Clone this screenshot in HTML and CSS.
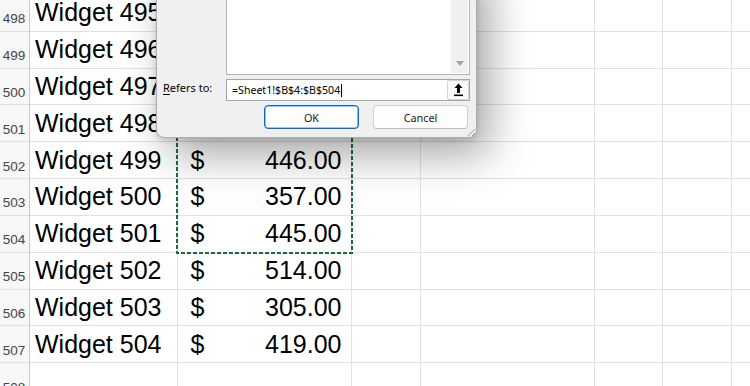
FILE: index.html
```html
<!DOCTYPE html>
<html lang="en">
<head>
<meta charset="utf-8">
<title>Name Manager - Refers to</title>
<link rel="stylesheet" href="styles.css">
</head>
<body>
<div class="screen">
  <div class="sheet">
    <div class="row"><div class="hdr">498</div><div class="cell name">Widget 495</div><div class="cell money"></div><div class="cell"></div><div class="cell"></div><div class="cell"></div><div class="cell"></div><div class="cell last"></div></div>
    <div class="row"><div class="hdr">499</div><div class="cell name">Widget 496</div><div class="cell money"></div><div class="cell"></div><div class="cell"></div><div class="cell"></div><div class="cell"></div><div class="cell last"></div></div>
    <div class="row"><div class="hdr">500</div><div class="cell name">Widget 497</div><div class="cell money"></div><div class="cell"></div><div class="cell"></div><div class="cell"></div><div class="cell"></div><div class="cell last"></div></div>
    <div class="row"><div class="hdr">501</div><div class="cell name">Widget 498</div><div class="cell money"></div><div class="cell"></div><div class="cell"></div><div class="cell"></div><div class="cell"></div><div class="cell last"></div></div>
    <div class="row"><div class="hdr">502</div><div class="cell name">Widget 499</div><div class="cell money"><span>$</span><span>446.00</span></div><div class="cell"></div><div class="cell"></div><div class="cell"></div><div class="cell"></div><div class="cell last"></div></div>
    <div class="row"><div class="hdr">503</div><div class="cell name">Widget 500</div><div class="cell money"><span>$</span><span>357.00</span></div><div class="cell"></div><div class="cell"></div><div class="cell"></div><div class="cell"></div><div class="cell last"></div></div>
    <div class="row"><div class="hdr">504</div><div class="cell name">Widget 501</div><div class="cell money"><span>$</span><span>445.00</span></div><div class="cell"></div><div class="cell"></div><div class="cell"></div><div class="cell"></div><div class="cell last"></div></div>
    <div class="row"><div class="hdr">505</div><div class="cell name">Widget 502</div><div class="cell money"><span>$</span><span>514.00</span></div><div class="cell"></div><div class="cell"></div><div class="cell"></div><div class="cell"></div><div class="cell last"></div></div>
    <div class="row"><div class="hdr">506</div><div class="cell name">Widget 503</div><div class="cell money"><span>$</span><span>305.00</span></div><div class="cell"></div><div class="cell"></div><div class="cell"></div><div class="cell"></div><div class="cell last"></div></div>
    <div class="row"><div class="hdr">507</div><div class="cell name">Widget 504</div><div class="cell money"><span>$</span><span>419.00</span></div><div class="cell"></div><div class="cell"></div><div class="cell"></div><div class="cell"></div><div class="cell last"></div></div>
    <div class="row"><div class="hdr">508</div><div class="cell name"></div><div class="cell money"></div><div class="cell"></div><div class="cell"></div><div class="cell"></div><div class="cell"></div><div class="cell last"></div></div>
  </div>

  <svg class="marquee" width="177" height="267" viewBox="0 0 177 267" aria-hidden="true">
    <rect x="1" y="1" width="175" height="264" fill="none" stroke="#1d6b3c" stroke-width="2" stroke-dasharray="4 2"/>
  </svg>

  <div class="dialog">
    <div class="listbox">
      <div class="list-area"></div>
      <div class="vscroll"><span class="arrow-down"></span></div>
    </div>
    <div class="refers">
      <label class="refers-label"><span class="acc">R</span>efers to:</label>
      <div class="ref-input">
        <span class="ref-text">=Sheet1!$B$4:$B$504</span><span class="caret"></span>
        <span class="collapse">
          <svg width="9" height="14" viewBox="0 0 9 14" aria-hidden="true">
            <path d="M4.5 0.5 L8.5 5 H6 V10 H3 V5 H0.5 Z" fill="#000"/>
            <rect x="0" y="11.5" width="9" height="1.6" fill="#000"/>
          </svg>
        </span>
      </div>
    </div>
    <div class="actions">
      <button class="btn btn-default">OK</button>
      <button class="btn">Cancel</button>
    </div>
    <svg class="grip" width="10" height="10" viewBox="0 0 10 10" aria-hidden="true">
      <path d="M9 2 L2 9 M9 6 L6 9" stroke="#9a9a9a" stroke-width="1" fill="none"/>
    </svg>
  </div>
</div>
</body>
</html>
```

FILE: styles.css
```css
* { box-sizing: border-box; }

html, body {
  margin: 0;
  padding: 0;
  background: #ffffff;
}

.screen {
  position: relative;
  width: 750px;
  height: 386px;
  overflow: hidden;
  background: #ffffff;
}

/* ---------- spreadsheet ---------- */
.sheet {
  margin-top: -5.1px;
  display: flex;
  flex-direction: column;
}

.row {
  display: grid;
  grid-template-columns: 30px 148px 174px 69px 174px 68px 69px 1fr;
  height: 36.84px;
}

.hdr {
  background: #f7f7f7;
  border-right: 1px solid #c9c9c9;
  border-bottom: 1px solid #dedede;
  color: #444444;
  font-family: "Liberation Sans", Arial, sans-serif;
  font-size: 13.5px;
  display: flex;
  align-items: flex-end;
  justify-content: center;
  padding-bottom: 4.4px;
  padding-right: 1px;
}

.cell {
  border-right: 1px solid #e1e1e1;
  border-bottom: 1px solid #e1e1e1;
  font-family: "Liberation Sans", Arial, sans-serif;
  font-size: 25px;
  color: #000;
  display: flex;
  align-items: flex-end;
  padding-bottom: 3.5px;
  white-space: nowrap;
}

.cell.last { border-right: none; }

.name { padding-left: 5px; }

.money {
  justify-content: space-between;
  padding-left: 12.5px;
  padding-right: 9.5px;
}

/* ---------- copy marquee ---------- */
.marquee {
  position: absolute;
  left: 176px;
  top: -12px;
}

/* ---------- dialog ---------- */
.dialog {
  position: absolute;
  left: 156px;
  top: -40px;
  width: 321px;
  height: 178px;
  background: #f0f0f0;
  border: 1px solid #ababab;
  border-top: none;
  border-radius: 0 0 8px 8px;
  box-shadow: 12px 16px 44px rgba(0, 0, 0, 0.36), 0 2px 6px rgba(0, 0, 0, 0.12);
  display: flex;
  flex-direction: column;
  padding: 0 6px 8px 0;
  font-family: "Noto Sans", "Open Sans", sans-serif;
  font-size: 10.6px;
  color: #000;
}

.listbox {
  flex: 1;
  margin-left: 69px;
  background: #ffffff;
  border: 1px solid #b4b4b4;
  display: flex;
}

.list-area { flex: 1; }

.vscroll {
  width: 17px;
  margin: 0 1px 1px 0;
  background: #f0f0f0;
  display: flex;
  align-items: flex-end;
  justify-content: center;
  padding-bottom: 7px;
}

.arrow-down {
  width: 0;
  height: 0;
  border-left: 4px solid transparent;
  border-right: 4px solid transparent;
  border-top: 5px solid #a3a3a3;
}

.refers {
  margin-top: 4px;
  height: 22px;
  display: flex;
}

.refers-label {
  width: 69px;
  padding-left: 6px;
  padding-top: 0.5px;
  font-size: 11px;
  line-height: normal;
  white-space: nowrap;
}

.acc {
  text-decoration: underline;
  text-underline-offset: 1.5px;
}

.ref-input {
  flex: 1;
  background: #ffffff;
  border: 1px solid #a6a6a6;
  display: flex;
  align-items: center;
  padding-left: 5px;
  white-space: nowrap;
}

.ref-text { line-height: normal; }

.caret {
  width: 1px;
  height: 13px;
  background: #000;
  margin-left: 0.5px;
}

.collapse {
  margin-left: auto;
  width: 22px;
  height: 20px;
  background: #fbfbfb;
  border: 1px solid #d4d4d4;
  border-radius: 2px;
  display: flex;
  align-items: center;
  justify-content: center;
}

.actions {
  margin-top: 4px;
  height: 24px;
  display: flex;
  justify-content: flex-end;
  gap: 14px;
  padding-right: 2px;
}

.btn {
  width: 95px;
  height: 24px;
  background: #fdfdfd;
  border: 1px solid #d0d0d0;
  border-bottom-color: #bdbdbd;
  border-radius: 4px;
  font-family: "Noto Sans", "Open Sans", sans-serif;
  font-size: 10.8px;
  color: #1a1a1a;
  padding: 0;
}

.btn-default {
  border: 1px solid #0f6cbd;
  box-shadow: inset 0 0 0 0.6px #4a8fd0;
}

.grip {
  position: absolute;
  right: 0;
  bottom: 0;
}
```
